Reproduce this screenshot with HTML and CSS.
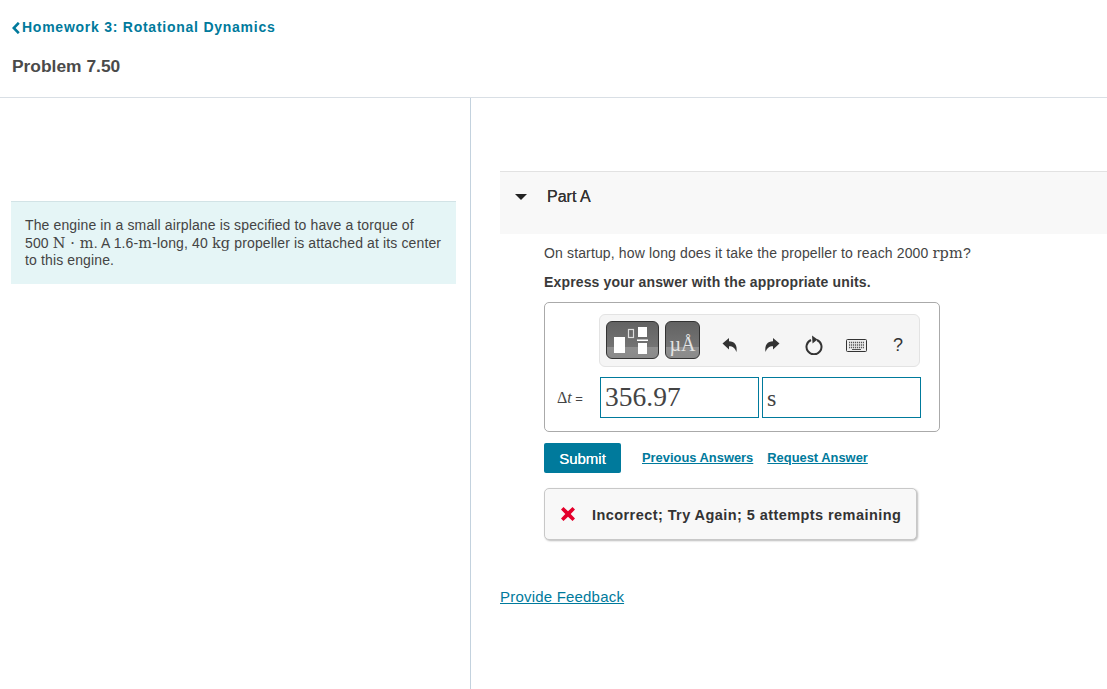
FILE: index.html
```html
<!DOCTYPE html>
<html lang="en">
<head>
    <meta charset="UTF-8">
    <title>Problem 7.50</title>
    <link rel="stylesheet" href="styles.css">
</head>
<body>
    <header class="page-header">
        <a class="back-link" href="#">
            <svg class="back-icon" width="8" height="12" viewBox="0 0 8 12"><path d="M6.8 0.8 L1.7 6 L6.8 11.2" fill="none" stroke="#007a9c" stroke-width="2.6"/></svg>
            Homework 3: Rotational Dynamics
        </a>
        <h1>Problem 7.50</h1>
    </header>
    <div class="columns">
        <div class="left-col">
            <div class="intro">
                The engine in a small airplane is specified to have a torque of<br>
                500 <span class="math">N &middot; m</span>. A 1.6-<span class="math">m</span>-long, 40 <span class="math">kg</span> propeller is attached at its center<br>
                to this engine.
            </div>
        </div>
        <div class="right-col">
            <div class="part-header">
                <span class="caret"></span>
                <span class="part-title">Part A</span>
            </div>
            <div class="part-body">
                <p class="question">On startup, how long does it take the propeller to reach 2000 <span class="math">rpm</span>?</p>
                <p class="instruction">Express your answer with the appropriate units.</p>
                <div class="answer-box">
                    <div class="toolbar">
                        <button class="tool-btn tool-wide">
                            <svg class="tool-svg" width="51" height="36" viewBox="0 0 51 36">
                                <rect x="7" y="15" width="11" height="16" fill="#fff"/>
                                <rect x="21.5" y="7.5" width="5" height="8" fill="none" stroke="#ddd" stroke-width="1.2"/>
                                <rect x="31" y="5" width="9" height="10" fill="#fff"/>
                                <rect x="30" y="17.5" width="11" height="1.5" fill="#fff"/>
                                <rect x="31" y="21" width="9" height="11" fill="#fff"/>
                            </svg>
                        </button>
                        <button class="tool-btn tool-units">&micro;&Aring;</button>
                        <span class="tool-icons">
                            <span class="tool-cell"><svg width="16" height="16" viewBox="0 0 16 16"><path d="M0.5 6.5 L7 1 V4.3 C12.5 4.3 15.5 8 14.5 15 C13 11 11 9.2 7 9.2 V12.5 Z" fill="#333"/></svg></span>
                            <span class="tool-cell"><svg width="16" height="16" viewBox="0 0 16 16"><path d="M15.5 6.5 L9 1 V4.3 C3.5 4.3 0.5 8 1.5 15 C3 11 5 9.2 9 9.2 V12.5 Z" fill="#333"/></svg></span>
                            <span class="tool-cell"><svg width="18" height="20" viewBox="0 0 18 20"><path d="M6 5 A7.5 7.5 0 1 0 12 5" fill="none" stroke="#333" stroke-width="2"/><path d="M7 0.5 L12.5 4.5 L7.5 8.5 Z" fill="#333"/></svg></span>
                            <span class="tool-cell"><svg width="21" height="13" viewBox="0 0 21 13"><rect x="0.5" y="0.5" width="20" height="12" rx="1" fill="#eee" stroke="#333"/><path d="M3 3.5 H18 M3 6 H18 M3 8.5 H18" stroke="#555" stroke-width="1.4" stroke-dasharray="1.2 0.8"/><path d="M6 10.5 H15" stroke="#555"/></svg></span>
                            <span class="tool-cell help">?</span>
                        </span>
                    </div>
                    <div class="input-row">
                        <span class="input-label"><span class="delta">&Delta;<i>t</i></span> =</span>
                        <div class="input-field input-value">356.97</div>
                        <div class="input-field input-unit">s</div>
                    </div>
                </div>
                <div class="actions">
                    <button class="submit">Submit</button>
                    <a class="action-link first" href="#">Previous Answers</a>
                    <a class="action-link" href="#">Request Answer</a>
                </div>
                <div class="feedback">
                    <svg width="16" height="16" viewBox="0 0 16 16"><path d="M1 3.5 L3.5 1 L8 5.3 L12.5 1 L15 3.5 L10.7 8 L15 12.5 L12.5 15 L8 10.7 L3.5 15 L1 12.5 L5.3 8 Z" fill="#e4002b"/></svg>
                    <span class="feedback-text">Incorrect; Try Again; 5 attempts remaining</span>
                </div>
            </div>
            <a class="provide-feedback" href="#">Provide Feedback</a>
        </div>
    </div>
</body>
</html>
```

FILE: styles.css
```css
body {
    font-family: 'Liberation Sans', Arial, sans-serif;
    background-color: #fff;
    margin: 0;
    color: #444;
    overflow: hidden;
}
.page-header {
    height: 97px;
    padding-left: 12px;
    border-bottom: 1px solid #d9dfe5;
}
.back-link {
    display: flex;
    align-items: center;
    gap: 2px;
    padding-top: 19px;
    font-size: 14px;
    line-height: 17px;
    font-weight: bold;
    letter-spacing: 0.75px;
    color: #007a9c;
    text-decoration: none;
}
.page-header h1 {
    margin: 20px 0 0;
    font-size: 17.4px;
    line-height: 20px;
    font-weight: bold;
    color: #4a4a4a;
}
.columns {
    display: flex;
    height: 591px;
}
.left-col {
    width: 471px;
    padding: 103px 14px 0 11px;
    box-sizing: border-box;
    border-right: 1px solid #c3d2de;
}
.intro {
    background-color: #e5f5f6;
    border-top: 1px solid #d2e3e6;
    height: 83px;
    padding: 15px 14px 0;
    box-sizing: border-box;
    font-size: 14px;
    line-height: 17.5px;
    letter-spacing: 0.13px;
}
.math {
    font-family: 'DejaVu Serif', 'Liberation Serif', serif;
    font-size: 14.5px;
}
.right-col {
    flex: 1;
    padding: 73px 0 0 29px;
}
.part-header {
    display: flex;
    height: 63px;
    padding: 16px 0 0 15px;
    box-sizing: border-box;
    background-color: #f8f8f8;
    border-top: 1px solid #e2e2e2;
}
.caret {
    width: 0;
    height: 0;
    margin-top: 6px;
    border-left: 6px solid transparent;
    border-right: 6px solid transparent;
    border-top: 6px solid #222;
}
.part-title {
    margin-left: 20px;
    font-size: 16px;
    line-height: 17px;
    color: #333;
    text-shadow: 0 0 0.4px #333;
}
.part-body {
    padding-left: 44px;
}
.question {
    margin: 10px 0 0;
    font-size: 14px;
    line-height: 18px;
    letter-spacing: 0.14px;
}
.instruction {
    margin: 11px 0 0;
    font-size: 14px;
    line-height: 18px;
    font-weight: bold;
    letter-spacing: 0.15px;
    color: #3a3a3a;
}
.answer-box {
    width: 396px;
    height: 130px;
    margin-top: 11px;
    padding: 11px 18px 0 11px;
    box-sizing: border-box;
    border: 1px solid #aaa;
    border-radius: 5px;
}
.toolbar {
    display: flex;
    align-items: flex-start;
    width: 321px;
    height: 53px;
    margin-left: 43px;
    padding: 6px 0 0 6px;
    box-sizing: border-box;
    background-color: #f5f5f5;
    border: 1px solid #e3e3e3;
    border-radius: 6px;
}
.tool-btn {
    height: 38px;
    padding: 0;
    border: 1px solid #333;
    border-radius: 6px;
    background: linear-gradient(#626262 0, #747474 70%, #8f8f8f 70%, #8a8a8a 100%);
    color: #e4e4e4;
}
.tool-svg {
    display: block;
}
.tool-wide {
    width: 53px;
}
.tool-units {
    width: 35px;
    margin-left: 6px;
    padding-top: 9px;
    font-family: 'Liberation Serif', serif;
    font-size: 20px;
}
.tool-icons {
    display: flex;
    align-items: center;
    height: 38px;
    margin: 5px 0 0 9px;
}
.tool-cell {
    display: flex;
    justify-content: center;
    width: 42px;
}
.help {
    font-size: 18px;
    color: #333;
}
.input-row {
    display: flex;
    align-items: center;
    margin-top: 10px;
}
.input-label {
    width: 44px;
    padding-left: 1px;
    box-sizing: border-box;
    font-size: 13px;
}
.delta {
    font-family: 'Liberation Serif', serif;
    font-size: 16px;
}
.input-field {
    width: 159px;
    height: 41px;
    box-sizing: border-box;
    border: 1px solid #007a9c;
    font-family: 'Liberation Serif', serif;
    padding-left: 4px;
}
.input-value {
    font-size: 27.5px;
    line-height: 38px;
}
.input-unit {
    margin-left: 3px;
    font-size: 24px;
    line-height: 40px;
}
.actions {
    display: flex;
    align-items: center;
    margin-top: 11px;
}
.submit {
    width: 77px;
    height: 30px;
    padding: 0;
    border: none;
    border-radius: 2px;
    background-color: #007a9c;
    color: #fff;
    font-family: inherit;
    font-size: 15px;
    text-shadow: 0 0 0.5px #fff;
}
.action-link {
    margin: 0 0 2px 14px;
    font-size: 12.9px;
    font-weight: bold;
    color: #007a9c;
}
.action-link.first {
    margin-left: 21px;
}
.feedback {
    display: flex;
    align-items: center;
    gap: 16px;
    width: 373px;
    height: 52px;
    margin-top: 15px;
    padding-left: 15px;
    box-sizing: border-box;
    background-color: #f8f8f8;
    border: 1px solid #c8c8c8;
    border-radius: 5px;
    box-shadow: 1px 1px 2px #bbb;
    font-size: 14.5px;
    font-weight: bold;
    letter-spacing: 0.43px;
    color: #333;
}
.feedback-text {
    padding-top: 2px;
}
.provide-feedback {
    display: inline-block;
    margin-top: 48px;
    font-size: 15px;
    letter-spacing: 0.2px;
    color: #007a9c;
}
```
